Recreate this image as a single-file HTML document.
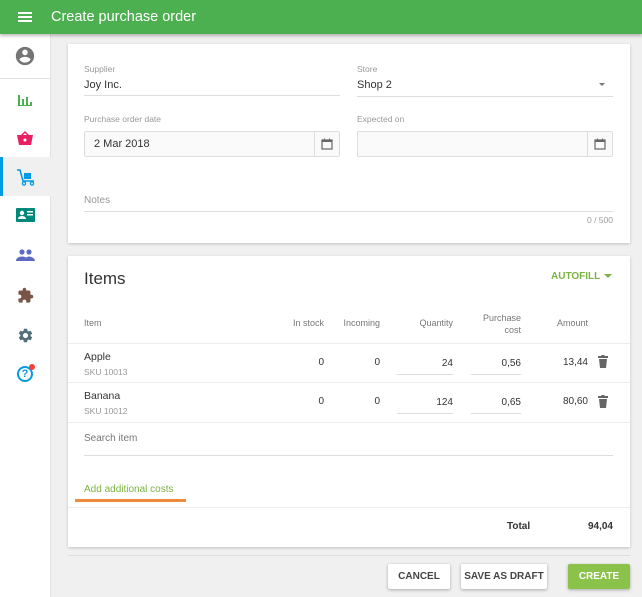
<!DOCTYPE html>
<html><head><meta charset="utf-8"><style>
*{box-sizing:border-box;margin:0;padding:0}
body{width:642px;height:597px;overflow:hidden;background:#f0f0f0;font-family:"Liberation Sans",sans-serif;color:#333;position:relative}
.a{position:absolute}
.hdr{left:0;top:0;width:642px;height:34px;background:#4caf50;box-shadow:0 2px 3px rgba(0,0,0,.25);z-index:2}
.side{left:0;top:34px;width:51px;height:563px;background:#fff;border-right:1px solid #e2e2e2}
.card{background:#fff;box-shadow:0 1px 3px rgba(0,0,0,.2)}
.lbl{font-size:8.5px;color:#999}
.val{font-size:11px;color:#333}
.line{height:1px;background:#ddd}
.box{border:1px solid #ddd;border-radius:2px;background:#fafafa;height:26px}
.th{font-size:9px;color:#777;text-align:right}
.num{font-size:10px;color:#333;text-align:right}
.btn{height:25px;background:#fff;box-shadow:0 1px 3px rgba(0,0,0,.3);border-radius:2px;font-size:10px;font-weight:bold;color:#444;text-align:center;line-height:25px}
</style></head><body>
<div class="a hdr">
 <div class="a" style="left:18px;top:12px;width:14px;height:2px;background:#fff;box-shadow:0 4px 0 #fff,0 8px 0 #fff"></div>
 <div class="a" style="left:51px;top:9px;color:#fff;font-size:14.5px">Create purchase order</div>
</div>
<div class="a side">
 <svg class="a" style="left:14px;top:11px" width="22" height="22" viewBox="0 0 24 24"><path fill="#757575" d="M12 2C6.48 2 2 6.48 2 12s4.480 10 10 10 10-4.48 10-10S17.52 2 12 2zm0 3c1.66 0 3 1.34 3 3s-1.34 3-3 3-3-1.34-3-3 1.34-3 3-3zm0 14.2c-2.5 0-4.71-1.28-6-3.22.03-1.99 4-3.08 6-3.08 1.990 0 5.97 1.09 6 3.08-1.29 1.94-3.5 3.22-6 3.22z"/></svg>
 <div class="a" style="left:0;top:44px;width:51px;height:1px;background:#e2e2e2"></div>
 <svg class="a" style="left:17px;top:58px" width="16" height="16" viewBox="0 0 16 16"><path fill="#4caf50" d="M1 3h2v11H1zM5 7h2v7H5zM9 5h2v9H9zM13 10h2v4h-2zM1 13h14v1H1z"/></svg>
 <svg class="a" style="left:16px;top:96px" width="18" height="16" viewBox="0 0 18 16"><path fill="#e91e63" d="M1 5h16l-2 10H3zM5 5l4-4 4 4h-2L9 3 7 5z"/><circle cx="9" cy="10" r="1.5" fill="#fff"/></svg>
 <div class="a" style="left:0;top:123px;width:51px;height:39px;background:#f0f0f0;border-left:3px solid #039be5"></div>
 <svg class="a" style="left:16px;top:134px" width="20" height="18" viewBox="0 0 20 18"><path fill="none" stroke="#039be5" stroke-width="1.6" d="M1 2h3l3 11h11"/><rect x="8" y="5" width="7" height="6" fill="#039be5"/><circle cx="8" cy="15.5" r="1.6" fill="none" stroke="#039be5" stroke-width="1.3"/><circle cx="16" cy="15.5" r="1.6" fill="none" stroke="#039be5" stroke-width="1.3"/></svg>
 <svg class="a" style="left:16px;top:174px" width="19" height="14" viewBox="0 0 19 14"><rect width="19" height="14" rx="1" fill="#00897b"/><circle cx="6" cy="5" r="2.2" fill="#fff"/><path fill="#fff" d="M2 11c0-2 2-3 4-3s4 1 4 3zM11 3h6v1.5h-6zM11 6h6v1.5h-6z"/></svg>
 <svg class="a" style="left:16px;top:214px" width="19" height="14" viewBox="0 0 19 14"><circle cx="6" cy="4" r="2.6" fill="#5c6bc0"/><circle cx="13" cy="4" r="2.6" fill="#5c6bc0"/><path fill="#5c6bc0" d="M0 13c0-3 3-4.5 6-4.5s6 1.5 6 4.5zM9 13c0-3 2-4.5 4-4.5s6 1.5 6 4.5z"/></svg>
 <svg class="a" style="left:17px;top:253px" width="17" height="17" viewBox="0 0 24 24"><path fill="#795548" d="M20.5 11H19V7c0-1.1-.9-2-2-2h-4V3.5C13 2.12 11.880 1 10.5 1S8 2.12 8 3.5V5H4c-1.1 0-1.99.9-1.99 2v3.8H3.5c1.49 0 2.7 1.21 2.7 2.7s-1.21 2.7-2.7 2.7H2V20c0 1.1.9 2 2 2h3.8v-1.5c0-1.49 1.21-2.7 2.7-2.7 1.49 0 2.7 1.21 2.7 2.7V22H17c1.1 0 2-.9 2-2v-4h1.5c1.38 0 2.5-1.12 2.5-2.5S21.88 11 20.5 11z"/></svg>
 <svg class="a" style="left:17px;top:293px" width="17" height="17" viewBox="0 0 24 24"><path fill="#546e7a" d="M19.14 12.94c.04-.3.06-.61.06-.94 0-.32-.02-.64-.07-.94l2.03-1.58c.18-.14.23-.41.12-.61l-1.92-3.32c-.12-.22-.37-.29-.59-.22l-2.39.96c-.5-.38-1.03-.7-1.62-.94l-.36-2.54c-.04-.24-.24-.41-.48-.41h-3.84c-.24 0-.43.17-.47.41l-.36 2.54c-.59.24-1.13.57-1.62.94l-2.39-.96c-.22-.08-.47 0-.59.22L2.74 8.87c-.12.21-.08.47.12.61l2.03 1.58c-.05.3-.09.63-.09.94s.02.64.07.94l-2.03 1.58c-.18.14-.23.41-.12.61l1.920 3.32c.12.22.37.29.59.22l2.39-.96c.5.38 1.03.7 1.62.94l.36 2.54c.05.24.24.41.48.41h3.84c.24 0 .44-.17.47-.41l.36-2.54c.59-.24 1.13-.56 1.62-.94l2.39.96c.22.08.47 0 .59-.22l1.92-3.32c.12-.22.07-.47-.12-.61l-2.01-1.58zM12 15.6c-1.98 0-3.6-1.62-3.6-3.6s1.62-3.6 3.6-3.6 3.6 1.62 3.6 3.6-1.62 3.6-3.6 3.6z"/></svg>
 <div class="a" style="left:17px;top:332px;width:16px;height:16px;border:2px solid #039be5;border-radius:50%;color:#039be5;font-size:11px;font-weight:bold;text-align:center;line-height:12px">?</div>
 <div class="a" style="left:29px;top:330px;width:6px;height:6px;border-radius:50%;background:#f44336"></div>
</div>

<div class="a card" style="left:68px;top:44px;width:562px;height:199px">
 <div class="a lbl" style="left:16px;top:20px">Supplier</div>
 <div class="a val" style="left:16px;top:35px">Joy Inc.</div>
 <div class="a line" style="left:16px;top:51px;width:256px"></div>
 <div class="a lbl" style="left:289px;top:20px">Store</div>
 <div class="a val" style="left:289px;top:35px">Shop 2</div>
 <div class="a" style="left:531px;top:39px;border:3px solid transparent;border-top:3px solid #777"></div>
 <div class="a line" style="left:289px;top:52px;width:256px"></div>
 <div class="a lbl" style="left:16px;top:70px">Purchase order date</div>
 <div class="a box" style="left:16px;top:87px;width:256px"><span class="a val" style="left:9px;top:6px">2 Mar 2018</span><div class="a" style="right:0;top:0;width:25px;height:24px;border-left:1px solid #ddd"></div><svg class="a" style="right:6px;top:6px" width="12" height="12" viewBox="0 0 12 12"><rect x="1" y="2" width="10" height="9" fill="none" stroke="#666" stroke-width="1.2"/><rect x="1" y="2" width="10" height="2" fill="#666"/><rect x="3" y="0.5" width="1" height="2" fill="#666"/><rect x="8" y="0.5" width="1" height="2" fill="#666"/></svg></div>
 <div class="a lbl" style="left:289px;top:70px">Expected on</div>
 <div class="a box" style="left:289px;top:87px;width:256px"><div class="a" style="right:0;top:0;width:25px;height:24px;border-left:1px solid #ddd"></div><svg class="a" style="right:6px;top:6px" width="12" height="12" viewBox="0 0 12 12"><rect x="1" y="2" width="10" height="9" fill="none" stroke="#666" stroke-width="1.2"/><rect x="1" y="2" width="10" height="2" fill="#666"/><rect x="3" y="0.5" width="1" height="2" fill="#666"/><rect x="8" y="0.5" width="1" height="2" fill="#666"/></svg></div>
 <div class="a" style="left:16px;top:151px;font-size:10px;color:#999">Notes</div>
 <div class="a line" style="left:16px;top:167px;width:529px"></div>
 <div class="a lbl" style="right:17px;top:171px">0 / 500</div>
</div>

<div class="a card" style="left:68px;top:256px;width:562px;height:291px">
 <div class="a" style="left:16px;top:13px;font-size:17px;color:#333">Items</div>
 <div class="a" style="left:483px;top:15px;font-size:10px;font-weight:bold;color:#7cb342">AUTOFILL</div>
 <div class="a" style="left:536px;top:18px;border:4px solid transparent;border-top:4px solid #7cb342"></div>
 <div class="a th" style="left:16px;top:62px;text-align:left">Item</div>
 <div class="a th" style="left:200px;width:56px;top:62px">In stock</div>
 <div class="a th" style="left:250px;width:62px;top:62px">Incoming</div>
 <div class="a th" style="left:320px;width:65px;top:62px">Quantity</div>
 <div class="a th" style="left:400px;width:53px;top:56px;line-height:12px">Purchase<br>cost</div>
 <div class="a th" style="left:470px;width:50px;top:62px">Amount</div>
 <div class="a line" style="left:0;top:87px;width:562px;background:#eee"></div>
 <div class="a val" style="left:16px;top:95px;font-size:10.5px">Apple</div>
 <div class="a lbl" style="left:16px;top:111px">SKU 10013</div>
 <div class="a num" style="left:200px;width:56px;top:101px">0</div>
 <div class="a num" style="left:250px;width:62px;top:101px">0</div>
 <div class="a num" style="left:330px;width:55px;top:102px">24</div>
 <div class="a line" style="left:329px;top:118px;width:56px"></div>
 <div class="a num" style="left:400px;width:53px;top:102px">0,56</div>
 <div class="a line" style="left:403px;top:118px;width:50px"></div>
 <div class="a num" style="left:470px;width:50px;top:101px">13,44</div>
 <svg class="a" style="left:530px;top:99px" width="10" height="13" viewBox="0 0 10 13"><path fill="#666" d="M0 1h3l1-1h2l1 1h3v2H0zM1 4h8l-1 9H2z"/></svg>
 <div class="a line" style="left:0;top:126px;width:562px;background:#eee"></div>
 <div class="a val" style="left:16px;top:134px;font-size:10.5px">Banana</div>
 <div class="a lbl" style="left:16px;top:150px">SKU 10012</div>
 <div class="a num" style="left:200px;width:56px;top:140px">0</div>
 <div class="a num" style="left:250px;width:62px;top:140px">0</div>
 <div class="a num" style="left:330px;width:55px;top:141px">124</div>
 <div class="a line" style="left:329px;top:157px;width:56px"></div>
 <div class="a num" style="left:400px;width:53px;top:141px">0,65</div>
 <div class="a line" style="left:403px;top:157px;width:50px"></div>
 <div class="a num" style="left:470px;width:50px;top:140px">80,60</div>
 <svg class="a" style="left:530px;top:139px" width="10" height="13" viewBox="0 0 10 13"><path fill="#666" d="M0 1h3l1-1h2l1 1h3v2H0zM1 4h8l-1 9H2z"/></svg>
 <div class="a line" style="left:0;top:166px;width:562px;background:#eee"></div>
 <div class="a" style="left:16px;top:177px;font-size:10px;color:#777">Search item</div>
 <div class="a line" style="left:16px;top:199px;width:529px"></div>
 <div class="a" style="left:16px;top:228px;font-size:10px;color:#7cb342">Add additional costs</div>
 <div class="a" style="left:7px;top:243px;width:111px;height:3px;background:#f08a3c"></div>
 <div class="a line" style="left:0;top:251px;width:562px;background:#eee"></div>
 <div class="a" style="left:439px;top:265px;font-size:10px;font-weight:bold">Total</div>
 <div class="a" style="left:492px;top:265px;font-size:10px;font-weight:bold;width:53px;text-align:right">94,04</div>
</div>
<div class="a" style="left:68px;top:555px;width:562px;height:1px;background:#ddd"></div>
<div class="a btn" style="left:388px;top:564px;width:62px">CANCEL</div>
<div class="a btn" style="left:461px;top:564px;width:86px">SAVE AS DRAFT</div>
<div class="a btn" style="left:568px;top:564px;width:62px;background:#8bc34a;color:#fff">CREATE</div>
</body></html>
